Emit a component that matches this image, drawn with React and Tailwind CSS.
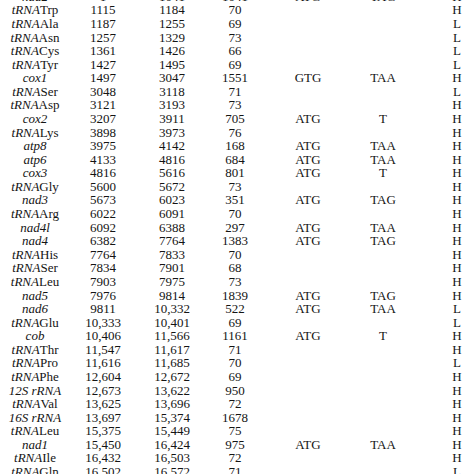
import React from "react";

const rows = [
  [<><i>nad2</i></>, "1", "1041", "1041", "ATG", "TAG", "H"],
  [<><i>tRNA</i>Trp</>, "1115", "1184", "70", "", "", "H"],
  [<><i>tRNA</i>Ala</>, "1187", "1255", "69", "", "", "L"],
  [<><i>tRNA</i>Asn</>, "1257", "1329", "73", "", "", "L"],
  [<><i>tRNA</i>Cys</>, "1361", "1426", "66", "", "", "L"],
  [<><i>tRNA</i>Tyr</>, "1427", "1495", "69", "", "", "L"],
  [<i>cox1</i>, "1497", "3047", "1551", "GTG", "TAA", "H"],
  [<><i>tRNA</i>Ser</>, "3048", "3118", "71", "", "", "L"],
  [<><i>tRNA</i>Asp</>, "3121", "3193", "73", "", "", "H"],
  [<i>cox2</i>, "3207", "3911", "705", "ATG", "T", "H"],
  [<><i>tRNA</i>Lys</>, "3898", "3973", "76", "", "", "H"],
  [<i>atp8</i>, "3975", "4142", "168", "ATG", "TAA", "H"],
  [<i>atp6</i>, "4133", "4816", "684", "ATG", "TAA", "H"],
  [<i>cox3</i>, "4816", "5616", "801", "ATG", "T", "H"],
  [<><i>tRNA</i>Gly</>, "5600", "5672", "73", "", "", "H"],
  [<i>nad3</i>, "5673", "6023", "351", "ATG", "TAG", "H"],
  [<><i>tRNA</i>Arg</>, "6022", "6091", "70", "", "", "H"],
  [<i>nad4l</i>, "6092", "6388", "297", "ATG", "TAA", "H"],
  [<i>nad4</i>, "6382", "7764", "1383", "ATG", "TAG", "H"],
  [<><i>tRNA</i>His</>, "7764", "7833", "70", "", "", "H"],
  [<><i>tRNA</i>Ser</>, "7834", "7901", "68", "", "", "H"],
  [<><i>tRNA</i>Leu</>, "7903", "7975", "73", "", "", "H"],
  [<i>nad5</i>, "7976", "9814", "1839", "ATG", "TAG", "H"],
  [<i>nad6</i>, "9811", "10,332", "522", "ATG", "TAA", "L"],
  [<><i>tRNA</i>Glu</>, "10,333", "10,401", "69", "", "", "L"],
  [<i>cob</i>, "10,406", "11,566", "1161", "ATG", "T", "H"],
  [<><i>tRNA</i>Thr</>, "11,547", "11,617", "71", "", "", "H"],
  [<><i>tRNA</i>Pro</>, "11,616", "11,685", "70", "", "", "L"],
  [<><i>tRNA</i>Phe</>, "12,604", "12,672", "69", "", "", "H"],
  [<i>12S rRNA</i>, "12,673", "13,622", "950", "", "", "H"],
  [<><i>tRNA</i>Val</>, "13,625", "13,696", "72", "", "", "H"],
  [<i>16S rRNA</i>, "13,697", "15,374", "1678", "", "", "H"],
  [<><i>tRNA</i>Leu</>, "15,375", "15,449", "75", "", "", "H"],
  [<i>nad1</i>, "15,450", "16,424", "975", "ATG", "TAA", "H"],
  [<><i>tRNA</i>Ile</>, "16,432", "16,503", "72", "", "", "H"],
  [<><i>tRNA</i>Gln</>, "16,502", "16,572", "71", "", "", "L"],
];

export default function App() {
  return (
    <div
      className="w-[474px] h-[474px] overflow-hidden bg-white text-[#141414] text-[13px] leading-[13.58px]"
      style={{ fontFamily: '"Liberation Serif", "Times New Roman", serif' }}
    >
      <div className="mt-[-10.2px] w-[502px]">
        {rows.map((r, i) => (
          <div
            key={i}
            className="grid grid-cols-[70px_66px_72px_54px_92px_58px_90px] h-[13.58px] text-center whitespace-nowrap"
          >
            {r.map((c, j) => (
              <div key={j}>{c}</div>
            ))}
          </div>
        ))}
      </div>
    </div>
  );
}
